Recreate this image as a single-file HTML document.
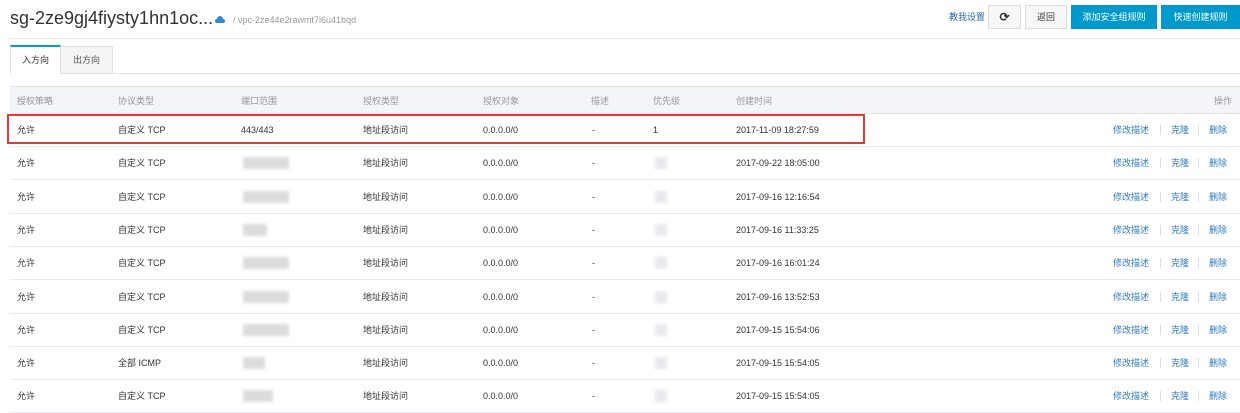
<!DOCTYPE html>
<html><head><meta charset="utf-8"><style>
*{margin:0;padding:0;box-sizing:border-box}
body{width:1240px;height:409px;overflow:hidden;background:#fff;font-family:"Liberation Sans","Noto Sans CJK SC",sans-serif;font-size:9px;color:#333;position:relative;line-height:12px}
.a{position:absolute;white-space:nowrap}
.title{left:10px;top:6px;font-size:18px;line-height:24px;color:#333}
.btn{position:absolute;top:5px;height:24px;border:1px solid #ddd;background:#f7f7f7;font-size:9px;text-align:center;line-height:22px;color:#333}
.blue{background:#0099cc;border-color:#0099cc;color:#fff}
.hdr{position:absolute;left:10px;top:86px;width:1230px;height:28px;background:#f4f5f9;border-top:1px solid #e6e6e6;border-bottom:1px solid #e6e6e6}
.row{position:absolute;left:10px;width:1230px;height:33px;border-bottom:1px solid #e8eaef}
.cell{position:absolute;top:10px;white-space:nowrap;line-height:12px}
.h{color:#999;top:8px}
.lk{color:#2e7bc1}
.sep{position:absolute;top:11px;width:1px;height:10px;background:#ddd}
.blur{position:absolute;top:10px;height:12px;background:#dcdcdc;filter:blur(1.5px)}
</style></head><body>
<div class="a title">sg-2ze9gj4fiysty1hn1oc...</div>
<svg class="a" style="left:215px;top:16px" width="10" height="7" viewBox="0 0 10 7"><path d="M2 7h6a2 2 0 0 0 0-4 3 3 0 0 0-6 0 2 2 0 0 0 0 4z" fill="#2e8bd1"/></svg>
<div class="a" style="left:233px;top:14px;color:#999;font-size:9px">/ vpc-2ze44e2rawmt7i6u41bqd</div>
<div class="a lk" style="left:949px;top:11px;color:#2b6ca8">教我设置</div>
<div class="btn" style="left:988px;width:33px;font-size:12px;font-weight:bold">⟳</div>
<div class="btn" style="left:1025px;width:42px">返回</div>
<div class="btn blue" style="left:1071px;width:86px">添加安全组规则</div>
<div class="btn blue" style="left:1161px;width:79px">快速创建规则</div>
<div class="a" style="left:10px;top:38px;width:1230px;height:1px;background:#e6e6e6"></div>
<div class="a" style="left:10px;top:73px;width:1230px;height:1px;background:#e2e2e2"></div>
<div class="a" style="left:10px;top:45px;width:51px;height:29px;background:#fff;border:1px solid #e2e2e2;border-top:2px solid #00a2ca;border-bottom:none;text-align:center;line-height:27px">入方向</div>
<div class="a" style="left:61px;top:46px;width:52px;height:28px;background:#f5f5f5;border:1px solid #e2e2e2;border-left:none;text-align:center;line-height:27px;color:#555">出方向</div>
<div class="hdr">
<span class="cell h" style="left:7px">授权策略</span><span class="cell h" style="left:108px">协议类型</span><span class="cell h" style="left:231px">端口范围</span><span class="cell h" style="left:353px">授权类型</span><span class="cell h" style="left:473px">授权对象</span><span class="cell h" style="left:581px">描述</span><span class="cell h" style="left:643px">优先级</span><span class="cell h" style="left:726px">创建时间</span><span class="cell h" style="left:1204px">操作</span>
</div>
<div id="rows"></div>
<div class="a" style="left:7px;top:114px;width:858px;height:30px;border:2px solid #e53935"></div>
<script>
var d=[["自定义 TCP","443/443","1","2017-11-09 18:27:59"],["自定义 TCP","","","2017-09-22 18:05:00"],["自定义 TCP","","","2017-09-16 12:16:54"],["自定义 TCP","","","2017-09-16 11:33:25"],["自定义 TCP","","","2017-09-16 16:01:24"],["自定义 TCP","","","2017-09-16 13:52:53"],["自定义 TCP","","","2017-09-15 15:54:06"],["全部 ICMP","","","2017-09-15 15:54:05"],["自定义 TCP","","","2017-09-15 15:54:05"]];
var bw=[0,46,46,24,46,46,46,22,30];
var h="";d.forEach(function(r,i){var t=114+i*33.3;
h+='<div class="row" style="top:'+t+'px"><span class="cell" style="left:7px">允许</span><span class="cell" style="left:108px">'+r[0]+'</span>';
if(r[1])h+='<span class="cell" style="left:231px">'+r[1]+'</span><span class="cell" style="left:643px">'+r[2]+'</span>';
else h+='<div class="blur" style="left:233px;width:'+bw[i]+'px"></div><div class="blur" style="left:645px;width:12px;background:#e8e8ee"></div>';
h+='<span class="cell" style="left:353px">地址段访问</span><span class="cell" style="left:473px">0.0.0.0/0</span><span class="cell" style="left:582px">-</span><span class="cell" style="left:726px">'+r[3]+'</span><span class="cell lk" style="left:1103px">修改描述</span><div class="sep" style="left:1150px"></div><span class="cell lk" style="left:1161px">克隆</span><div class="sep" style="left:1188px"></div><span class="cell lk" style="left:1199px">删除</span></div>';});
document.getElementById("rows").innerHTML=h;
</script>
</body></html>
